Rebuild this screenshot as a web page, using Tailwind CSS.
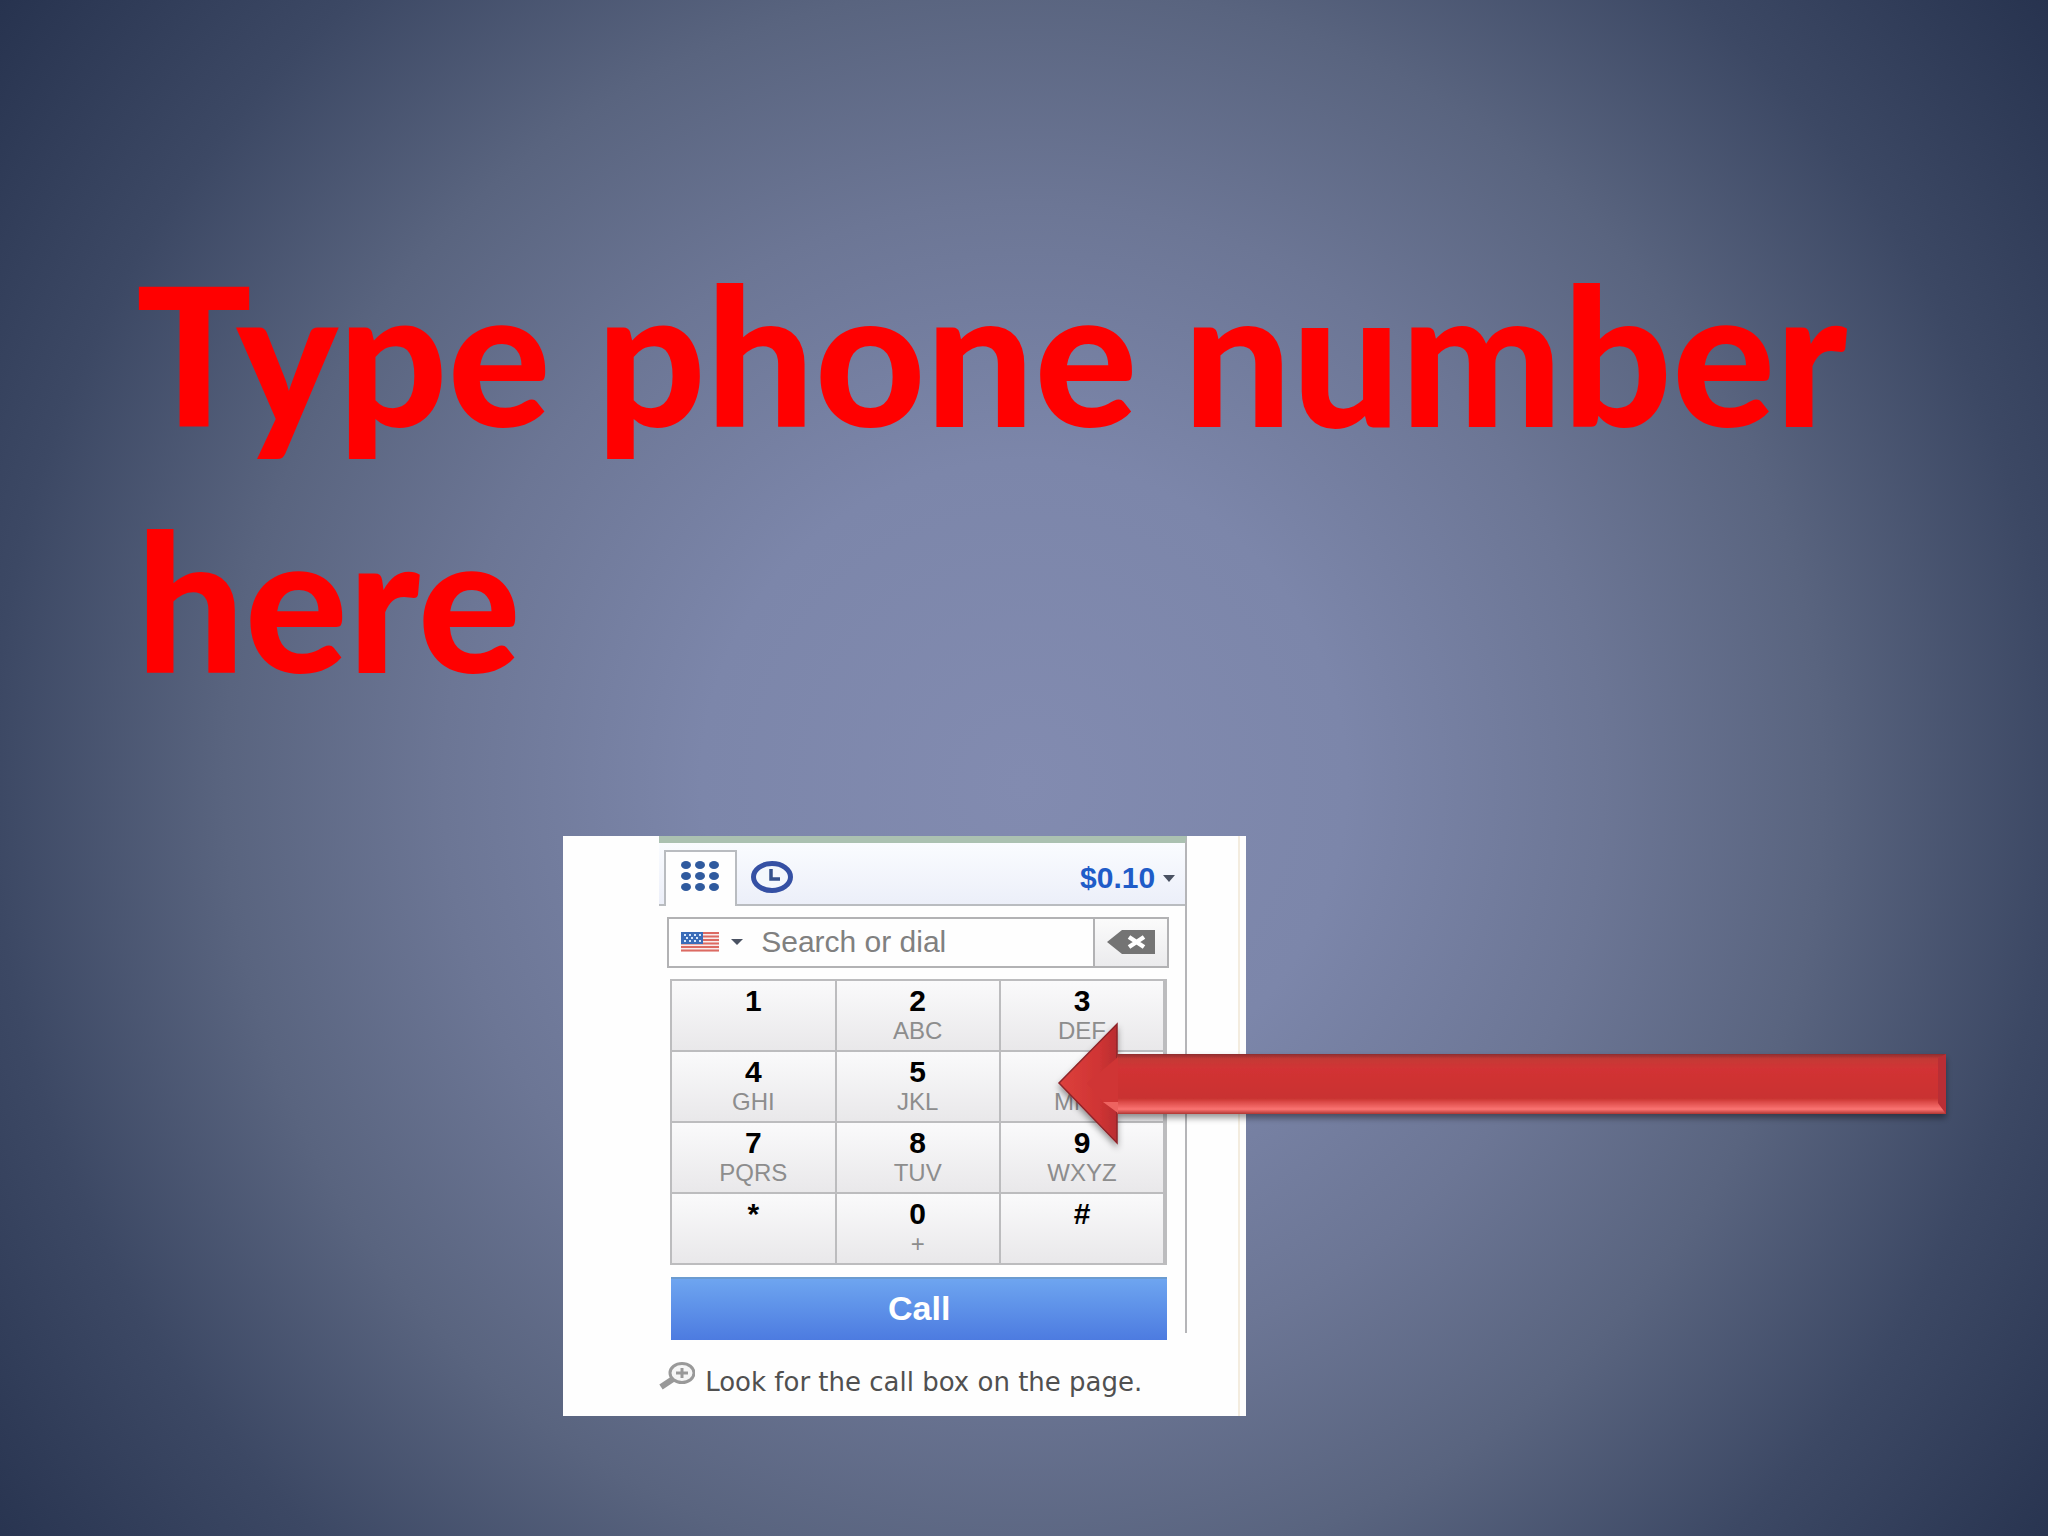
<!DOCTYPE html>
<html lang="en">
  <head>
    <meta charset="UTF-8" />
    <meta name="viewport" content="width=device-width, initial-scale=1.0" />
    <title>Type phone number here</title>
    <script src="https://cdn.jsdelivr.net/npm/@tailwindcss/browser@4"></script>
  </head>
  <body
    class="min-h-screen overflow-x-hidden bg-[#28344f] bg-[radial-gradient(circle_at_50%_51%,#828bb0_0%,#7c86aa_25%,#6c7695_45%,#59647f_62%,#3c4864_80%,#27334f_100%)] font-['Liberation_Sans',Arial,sans-serif]"
  >
    <main class="pt-[230px] pb-[120px]">
      <h1 class="px-[136px] font-['Lato',sans-serif] text-[192px] leading-[246px] font-black text-[#ff0000]">
        Type phone number here
      </h1>

      <figure class="relative mt-[114px] ml-[27.5%] w-[683px] bg-[#fefefe] pr-[6px]">
        <div class="border-r-2 border-[#f3ecdf] pb-[18px] pl-24">
          <section class="flow-root w-[528px] border-t-[7px] border-r-2 border-t-[#abc1b1] border-r-[#b5b5b8]">
            <div class="flex h-[63px] items-end border-b-2 border-[#b9bcc0] bg-linear-to-b from-[#fafcff] to-[#eceff9] pl-[5px]">
              <button
                class="-mb-[2px] flex h-[56px] w-[73px] items-start justify-center border-2 border-b-0 border-[#b9bcc0] bg-[#fefefe] pt-[9px] pr-[2px]"
                type="button"
                aria-label="Keypad"
              >
                <svg class="h-[30px] w-[38px]" viewBox="0 0 38 30" fill="#2f5a9e">
                  <ellipse cx="5" cy="4" rx="5" ry="4" />
                  <ellipse cx="19" cy="4" rx="5" ry="4" />
                  <ellipse cx="33" cy="4" rx="5" ry="4" />
                  <ellipse cx="5" cy="15" rx="5" ry="4" />
                  <ellipse cx="19" cy="15" rx="5" ry="4" />
                  <ellipse cx="33" cy="15" rx="5" ry="4" />
                  <ellipse cx="5" cy="26" rx="5" ry="4" />
                  <ellipse cx="19" cy="26" rx="5" ry="4" />
                  <ellipse cx="33" cy="26" rx="5" ry="4" />
                </svg>
              </button>
              <button class="mb-[11px] ml-[14px]" type="button" aria-label="Recent calls">
                <svg class="h-8 w-[42px]" viewBox="0 0 42 32" fill="none">
                  <ellipse cx="21" cy="16" rx="18.500" ry="13.500" fill="#f4f7fd" stroke="#3550a4" stroke-width="5" />
                  <path d="M20 8v10h9" stroke="#34508c" stroke-width="3.500" />
                </svg>
              </button>
              <button
                class="mr-[10px] mb-[10px] ml-auto flex items-center gap-2 text-[30px] leading-8 font-bold text-[#1f5cc8]"
                type="button"
              >
                $0.10
                <svg class="h-[7px] w-3" viewBox="0 0 12 7"><path d="M0 0h12L6 7z" fill="#4a5262" /></svg>
              </button>
            </div>

            <div class="mt-[11px] mr-4 ml-2 flex h-[51px] border-2 border-[#b2b2b4] bg-[#fefefe]">
              <button class="flex items-center gap-3 pb-[2px] pl-3" type="button" aria-label="Country">
                <svg class="h-5 w-[38px]" viewBox="0 0 38 20">
                  <path d="M0 0h38v20H0z" fill="#f8ecec" />
                  <path
                    d="M0 1h38M0 4.500h38M0 8h38M0 11.500h38M0 15h38M0 18.500h38"
                    stroke="#dc6a62"
                    stroke-width="1.800"
                  />
                  <path d="M0 0h22v12H0z" fill="#3a6cb8" />
                  <path
                    d="M3 3h2M8 3h2M13 3h2M18 3h2M5 6h2M10 6h2M15 6h2M3 9h2M8 9h2M13 9h2M18 9h2"
                    stroke="#d5e6f8"
                    stroke-width="2"
                  />
                </svg>
                <svg class="h-[6px] w-3" viewBox="0 0 12 6"><path d="M0 0h12L6 6z" fill="#4a5262" /></svg>
              </button>
              <input
                class="min-w-0 flex-1 bg-transparent pb-[2px] pl-[18px] text-[30px] leading-8 placeholder:text-[#808080] focus:outline-none"
                type="tel"
                aria-label="Search or dial"
                placeholder="Search or dial"
              />
              <button
                class="flex w-[74px] items-center justify-center border-l-2 border-[#b2b2b4] bg-linear-to-b from-[#fbfbfb] to-[#ebebed] pb-[2px]"
                type="button"
                aria-label="Delete"
              >
                <svg class="h-6 w-12" viewBox="0 0 48 24">
                  <path d="M0 12 15 0h33v24H15z" fill="#747474" />
                  <path d="m22 7 15 10M37 7 22 17" stroke="#fff" stroke-width="4.500" />
                </svg>
              </button>
            </div>

            <div
              id="keypad"
              class="mt-[11px] mr-[18px] ml-[11px] grid grid-cols-3 gap-[2px] border-2 border-r-4 border-[#bcbcbe] bg-[#bcbcbe]"
            ></div>

            <!-- the call button hangs a little below the sidebar rule -->
            <button
              class="mt-3 -mb-[7px] ml-3 block h-[63px] w-[496px] border-t-2 border-[#6b9bd0] bg-linear-to-b from-[#6ea5f0] to-[#4d7be0] pb-1 text-[34px] leading-8 font-bold text-white"
              type="button"
            >
              Call
            </button>
          </section>

          <figcaption class="mt-[29px] flex items-start gap-[10px]">
            <svg class="h-7 w-9" viewBox="0 0 36 28" fill="none" stroke="#999">
              <path d="m2 25 12-8" stroke-width="6" />
              <ellipse cx="23" cy="11" rx="12" ry="9.500" fill="#f6f6f6" stroke-width="3" />
              <path d="M17 11h12M23 6v10" stroke-width="3" />
            </svg>
            <span class="mt-[4px] font-['DejaVu_Sans',sans-serif] text-[26px] leading-8 whitespace-nowrap text-[#505050]">Look for the call box on the page.</span>
          </figcaption>
        </div>

        <svg class="absolute top-[180px] left-[488px] h-[140px] w-[908px]" viewBox="0 0 908 140">
          <defs>
            <linearGradient id="shaft" x1="0" y1="0" x2="0" y2="1">
              <stop offset="0" stop-color="#8e2c2e" />
              <stop offset="0.080" stop-color="#c43a36" />
              <stop offset="0.250" stop-color="#d23334" />
              <stop offset="0.740" stop-color="#c93330" />
              <stop offset="0.800" stop-color="#dc4a48" />
              <stop offset="0.920" stop-color="#fb7472" />
              <stop offset="1" stop-color="#b03632" />
            </linearGradient>
            <linearGradient id="head" x1="0" y1="0" x2="1" y2="0">
              <stop offset="0" stop-color="#dd403c" />
              <stop offset="0.700" stop-color="#cf3434" />
              <stop offset="1" stop-color="#b92c30" />
            </linearGradient>
            <filter id="shadow" x="-5%" y="-20%" width="110%" height="150%">
              <feDropShadow dx="0" dy="4" stdDeviation="3" flood-color="#000" flood-opacity="0.400" />
            </filter>
          </defs>
          <g filter="url(#shadow)">
            <path d="M8 67 66 8v119z" fill="url(#head)" stroke="#8e2429" stroke-width="1.500" />
            <path d="M66 38h829v60H66z" fill="url(#shaft)" />
            <path d="M36 67 67 41v45H52z" fill="#d03534" />
            <path d="m52 86 15 11V86z" fill="#ee6461" />
            <path d="M895 38v60l-8-11V42z" fill="#b92e35" />
          </g>
        </svg>
      </figure>
    </main>

    <script>
      const keys = [
        ["1", ""],
        ["2", "ABC"],
        ["3", "DEF"],
        ["4", "GHI"],
        ["5", "JKL"],
        ["6", "MNO"],
        ["7", "PQRS"],
        ["8", "TUV"],
        ["9", "WXYZ"],
        ["*", ""],
        ["0", "+"],
        ["#", ""],
      ];

      document.getElementById("keypad").innerHTML = keys
        .map(
          ([digit, letters]) => `
          <button type="button" class="flex h-[69px] flex-col items-center bg-linear-to-b from-[#fafafb] to-[#e9e8ea] pt-1">
            <span class="text-[30px] leading-8 font-bold text-black">${digit}</span>
            <span class="text-[24px] leading-7 text-[#8d8d8d]">${letters}</span>
          </button>`
        )
        .join("");
    </script>
  </body>
</html>
